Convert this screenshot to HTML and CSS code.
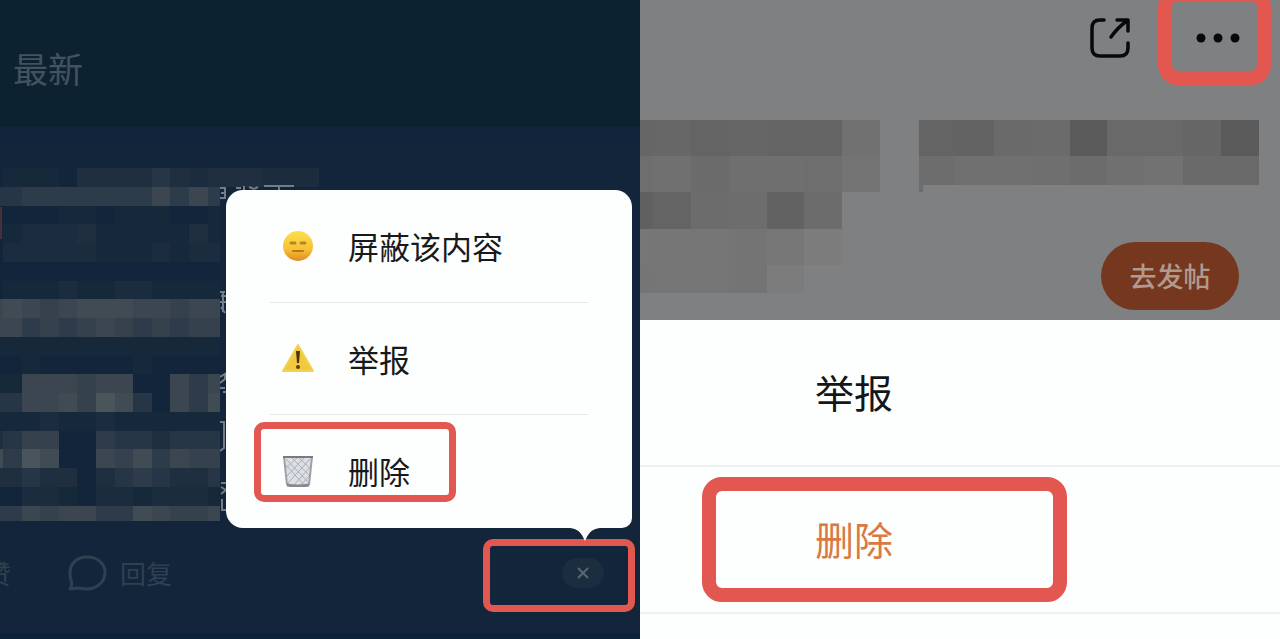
FILE: index.html
```html
<!DOCTYPE html>
<html lang="zh-CN">
<head>
  <meta charset="UTF-8">
  <title>删除内容</title>
  <link rel="stylesheet" href="styles.css">
</head>
<body>
  <main class="guide">
    <section class="pane dark">
      <header class="tabs">最新</header>

      <div class="comment">
        <svg class="mosaic" id="mosaic-comment" aria-hidden="true"></svg>
        <svg class="scraps" viewBox="0 0 100 353" aria-hidden="true">
          <path d="M0 20h5v5H1m4 0v5H0M16 20h5m3-2v4m5-3 5 2 4-2M44 18h30m-15 0v4"/>
          <path d="M0 124h5M1 128h5M3 124v20M0 134h6M1 139l4 6M0 209l5-3v5l-5 4m0 5h5m-2 4h3M0 254h4v26l-4 3M1 315h5m-5 4 5 3m-5 4 5-4M2 331v11h4"/>
        </svg>
      </div>

      <div class="actions">
        <button class="action like">赞</button>
        <button class="action">
          <svg width="40" height="38" viewBox="0 0 40 38" fill="none" stroke="currentColor" stroke-width="3">
            <path d="M3 35C5 32 5 29 4 26C0 12 8 3 20 3C31 3 38 10 38 18.500C38 27 31 35 20 35C15 35 12 34 10 34Z" stroke-linejoin="round"/>
          </svg>
          回复
        </button>
        <div class="more">
          <button class="close" aria-label="更多">
            <svg width="12" height="12" viewBox="0 0 12 12" stroke="currentColor" stroke-width="2"><path d="M1 1l10 10M11 1L1 11"/></svg>
          </button>
          <span class="mark mark-more"></span>
        </div>
      </div>

      <div class="popup">
        <button class="option">
          <svg width="32" height="32" viewBox="0 0 32 32">
            <defs>
              <linearGradient id="face" x1="0" y1="0" x2="0" y2="1">
                <stop offset="0" stop-color="#fbe04e"/>
                <stop offset=".6" stop-color="#f8c136"/>
                <stop offset="1" stop-color="#e08a22"/>
              </linearGradient>
            </defs>
            <circle cx="16" cy="16" r="15" fill="url(#face)"/>
            <path d="M9 13h4M19 13h4" stroke="#b98420" stroke-width="3" stroke-linecap="round"/>
            <path d="M11 21h10" stroke="#b47a1b" stroke-width="2" stroke-linecap="round"/>
          </svg>
          屏蔽该内容
        </button>
        <button class="option">
          <svg width="32" height="32" viewBox="0 0 32 32">
            <path d="M16 2L31 28H1Z" fill="#f2c93c" stroke="#f3d154" stroke-width="2" stroke-linejoin="round"/>
            <path d="M14 8h4l-1 12h-2Z" fill="#4b3213"/>
            <circle cx="16" cy="24" r="2" fill="#5c3e15"/>
          </svg>
          举报
        </button>
        <button class="option">
          <svg width="32" height="32" viewBox="0 0 32 32">
            <path d="M2 2L5 31Q16 33 26 31L30 2Z" fill="#dcdfe3"/>
            <path d="M4 10L23 31M4 4L27 28M10 3L28 21M17 3L29 14M28 4L6 28M22 3L5 21M15 3L4 13M29 11L11 31M28 20L18 31" stroke="#a9aeb5" fill="none"/>
            <path d="M2 2L5 30M30 2L27 30" stroke="#9ca1a8" stroke-width="2"/>
            <path d="M1 2H31" stroke="#767b82" stroke-width="2"/>
            <path d="M5 30Q16 32 27 30" stroke="#858a91" stroke-width="3" fill="none"/>
          </svg>
          删除
          <span class="mark mark-option"></span>
        </button>
        <svg class="arrow" width="30" height="13" viewBox="0 0 30 13" aria-hidden="true"><path d="M0 0H30C22 1 19 4 15 13C11 4 8 1 0 0Z" fill="#fdfefe"/></svg>
      </div>
    </section>

    <section class="pane light">
      <div class="page">
        <header class="toolbar">
          <button class="tool" aria-label="分享">
            <svg width="42" height="42" viewBox="0 0 42 42" fill="none" stroke="#08090a" stroke-width="3.500" stroke-linecap="round">
              <path d="M14 3H10Q2 3 2 11V31Q2 39 10 39H30Q38 39 38 31V26"/>
              <path d="M27 3H38V14M37 4Q28 10 21 20" stroke-linejoin="round"/>
            </svg>
          </button>
          <button class="tool" aria-label="更多操作">
            <svg width="44" height="10" viewBox="0 0 44 10" fill="#08090a">
              <circle cx="5" cy="5" r="4.500"/><circle cx="22" cy="5" r="4.500"/><circle cx="39" cy="5" r="4.500"/>
            </svg>
            <span class="mark mark-tool"></span>
          </button>
        </header>
        <div class="posts">
          <svg class="mosaic-post" id="mosaic-left" aria-hidden="true"></svg>
          <div class="side">
            <svg class="mosaic-side" id="mosaic-right" aria-hidden="true"></svg>
            <button class="publish">去发帖</button>
          </div>
        </div>
      </div>

      <div class="sheet">
        <button class="sheet-item">举报</button>
        <button class="sheet-item danger">删除<span class="mark mark-sheet"></span></button>
      </div>
    </section>
  </main>

  <script src="script.js"></script>
</body>
</html>
```

FILE: styles.css
```css
* {
  box-sizing: border-box;
}

body {
  margin: 0;
  font-family: "Noto Sans CJK SC", sans-serif;
  background: #fdfefe;
}

button {
  border: none;
  padding: 0;
  margin: 0;
  background: none;
  color: inherit;
  font-family: inherit;
  cursor: pointer;
}

svg {
  display: block;
  flex: none;
}

.guide {
  display: flex;
  min-height: 100vh;
}

.pane {
  flex: 1;
  min-width: 0;
  position: relative;
  display: flex;
  flex-direction: column;
  overflow: hidden;
}

/* red outlines over the controls to tap */
.mark {
  position: absolute;
  border: 7px solid #e2574f;
  border-radius: 10px;
  pointer-events: none;
}

/* left: comment list */
.dark {
  background: #12253a;
  border-bottom: 6px solid #0c2238;
  color: #43525f;
}

.tabs {
  height: 127px;
  padding: 8px 13px 0;
  display: flex;
  align-items: center;
  background: #0d2231;
  font-size: 35px;
  line-height: 48px;
}

.comment {
  position: relative;
  padding-top: 41px;
  background: linear-gradient(#10243f, #12253a 20px);
}

.comment::before {
  content: "";
  position: absolute;
  left: 0;
  top: 80px;
  width: 2px;
  height: 32px;
  background: #482f3b;
}

.mosaic {
  width: 100%;
  height: 353px;
}

.scraps {
  position: absolute;
  left: 220px;
  top: 41px;
  width: 100px;
  height: 353px;
  fill: none;
  stroke: #737d87;
  stroke-width: 2;
}

.actions {
  flex: 1;
  padding-bottom: 8px;
  display: flex;
  align-items: center;
  gap: 56px;
  color: #2f4150;
}

.action {
  display: flex;
  align-items: center;
  gap: 13px;
  font-size: 26px;
  line-height: 36px;
}

.like {
  margin-left: -15px;
}

.more {
  position: relative;
  margin-left: auto;
  margin-right: 36px;
}

.close {
  display: flex;
  align-items: center;
  justify-content: center;
  width: 42px;
  height: 30px;
  border-radius: 15px;
  background: #1b2e3f;
  color: #596875;
}

.mark-more {
  left: -79px;
  right: -31px;
  top: -19px;
  bottom: -24px;
}

.popup {
  position: absolute;
  top: 190px;
  left: 226px;
  right: 8px;
  padding: 0 44px 2px;
  background: #fdfefe;
  border-radius: 17px 17px 10px 17px;
}

.option {
  position: relative;
  width: 100%;
  height: 112px;
  padding-left: 12px;
  display: flex;
  align-items: center;
  gap: 34px;
  font-size: 31px;
  line-height: 44px;
  color: #17191b;
}

.option + .option {
  border-top: 1px solid #e5e8eb;
}

.arrow {
  position: absolute;
  right: 32px;
  top: 100%;
}

.mark-option {
  left: -16px;
  top: 7px;
  width: 202px;
  bottom: 24px;
}

/* right: post page with action sheet */
.page {
  background: #7f8081;
  height: 320px;
}

.toolbar {
  height: 120px;
  padding: 17px 40px 0 0;
  display: flex;
  align-items: flex-start;
  justify-content: flex-end;
  gap: 64px;
}

.tool {
  position: relative;
  height: 42px;
  display: flex;
  align-items: center;
}

.mark-tool {
  border-width: 14px;
  border-radius: 20px;
  left: -38px;
  right: -31px;
  top: -30px;
  bottom: -26px;
}

.posts {
  display: flex;
  justify-content: space-between;
  padding-right: 21px;
}

.side {
  display: flex;
  flex-direction: column;
  align-items: flex-end;
  gap: 50px;
}

.mosaic-post {
  width: 240px;
  height: 173px;
}

.mosaic-side {
  width: 340px;
  height: 72px;
}

.publish {
  width: 138px;
  height: 68px;
  margin-right: 20px;
  border-radius: 34px;
  background: #75371d;
  color: #b09a90;
  font-size: 27px;
  font-weight: 500;
  line-height: 40px;
}

.sheet {
  flex: 1;
  background: #fdfefe;
}

.sheet-item {
  position: relative;
  display: block;
  width: 100%;
  height: 147px;
  padding: 0 0 4px 175px;
  border-bottom: 2px solid #eff0f2;
  text-align: left;
  font-size: 39px;
  line-height: 56px;
  color: #141618;
}

.danger {
  color: #da7942;
}

.mark-sheet {
  border-width: 14px;
  border-radius: 20px;
  left: 62px;
  top: 10px;
  width: 365px;
  bottom: 10px;
}
```

FILE: script.js
```javascript
const NS = 'http://www.w3.org/2000/svg';

function addRect(svg, x, y, x2, y2, fill) {
  const rect = document.createElementNS(NS, 'rect');
  rect.setAttribute('x', x);
  rect.setAttribute('y', y);
  rect.setAttribute('width', x2 - x);
  rect.setAttribute('height', y2 - y);
  rect.setAttribute('fill', fill);
  svg.appendChild(rect);
}

// one digit per cell, 0 = background
const levels = ['#12253b', '#15293b', '#1a2c3d', '#202f3f', '#273646', '#2e3b4a', '#35414c', '#3b4650', '#414b54', '#4a555b'];
const comment = [
  '011103333432333222',
  '4455555557575',
  '0000110111001',
  '0122231111131',
  '0222221112122',
  '0000000000000',
  '0111211221111',
  '7876788877677',
  '7756567656566',
  '1111111111111',
  '0010000010000',
  '1177767700757',
  '4477869840758',
  '1112112111111',
  '3466005443444',
  '8598007685766',
  '3343303454334',
  '0022102212221',
  '5576775587667'
];

const commentSvg = document.getElementById('mosaic-comment');
const edge = i => Math.max(0, Math.round(3 + (i - 1) * 18.6));
comment.forEach((row, r) => {
  const y = Math.round(r * 18.75);
  const y2 = Math.min(353, Math.round((r + 1) * 18.75));
  [...row].forEach((level, c) => {
    // only the first line runs past the text column
    const x2 = r === 0 ? edge(c + 1) : Math.min(220, edge(c + 1));
    if (level !== '0') addRect(commentSvg, edge(c), y, x2, y2, levels[level]);
  });
});

// two hex digits of grey per cell
function greyMosaic(id, xs, ys, rows) {
  const svg = document.getElementById(id);
  rows.forEach((row, r) => {
    row.split(' ').forEach((g, c) => {
      if (g !== '--') addRect(svg, xs[c], ys[r], xs[c + 1], ys[r + 1], `#${g}${g}${g}`);
    });
  });
}

greyMosaic('mosaic-left', [0, 13, 51, 89, 127, 164, 202, 240], [0, 36, 72, 109, 145, 173], [
  '66 67 64 66 64 64 71',
  '6e 70 6b 6f 6f 6e 73',
  '60 64 6c 6d 62 6c --',
  '77 76 76 74 77 7c --',
  '75 76 76 74 7c -- --'
]);

greyMosaic('mosaic-right', [0, 36, 75, 113, 151, 188, 226, 264, 302, 340], [0, 36, 65], [
  '64 63 6a 6b 5a 69 69 66 5a',
  '6d 70 70 6f 6c 70 72 6a 6a'
]);
addRect(document.getElementById('mosaic-right'), 0, 65, 4, 72, '#6d6e6f');
```
